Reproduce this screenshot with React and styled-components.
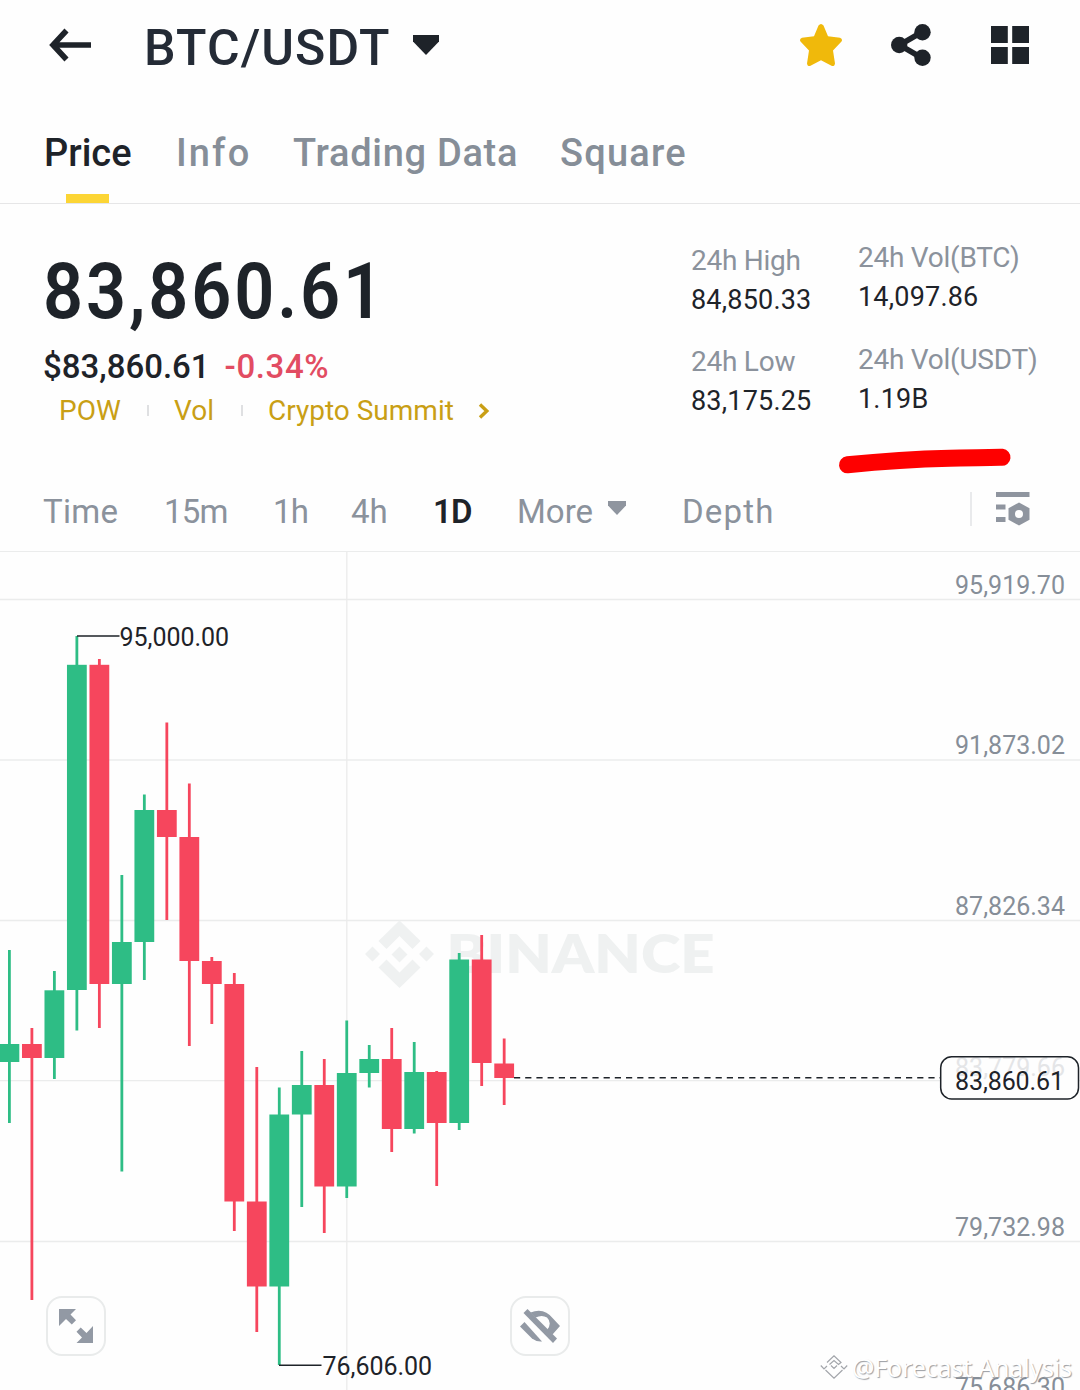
import React from 'react';
import styled, { createGlobalStyle } from 'styled-components';

const GlobalStyle = createGlobalStyle`
    * {
        box-sizing: border-box;
        margin: 0;
        padding: 0;
    }

    body {
        background: #fefefe;
        color: #1e2329;
        font-family: Roboto, "Liberation Sans", sans-serif;
        overflow: hidden;
    }

    svg {
        display: block;
    }
`;

const UP = '#2ebd85';
const DOWN = '#f6465d';

const tabs = [
    { name: 'Price', width: 132, active: true },
    { name: 'Info', width: 117, spacing: 2.1 },
    { name: 'Trading Data', width: 267, spacing: 0.7 },
    { name: 'Square', width: 140, spacing: 1.2 },
];

const intervals = [
    { name: 'Time', width: 121, spacing: 0.3 },
    { name: '15m', width: 109, spacing: -0.8 },
    { name: '1h', width: 78, spacing: -0.8 },
    { name: '4h', width: 82 },
    { name: '1D', width: 84, active: true, spacing: -0.8 },
    { name: 'More', width: 165, menu: true },
    { name: 'Depth', width: 120, spacing: 1.2 },
];

const stats = [
    [
        { label: '24h High', value: '84,850.33' },
        { label: '24h Low', value: '83,175.25' },
    ],
    [
        { label: '24h Vol(BTC)', value: '14,097.86' },
        { label: '24h Vol(USDT)', value: '1.19B' },
    ],
];

// [direction, high, body top, body bottom, low]
const candles = [
    ['up', 950, 1044, 1062, 1123],
    ['down', 1028, 1044, 1058, 1300],
    ['up', 971, 990.3, 1058, 1079],
    ['up', 636, 664.8, 990, 1030.5],
    ['down', 659, 664.8, 984, 1028],
    ['up', 875, 942, 984, 1171.5],
    ['up', 794.5, 810, 942, 980],
    ['down', 722.5, 810, 837, 920],
    ['down', 783.5, 837, 961, 1046],
    ['down', 957, 961, 984, 1024],
    ['down', 973, 984, 1201.5, 1231],
    ['down', 1067, 1201.5, 1286.5, 1332],
    ['up', 1087.5, 1114.5, 1286.5, 1365],
    ['up', 1051, 1085, 1114.5, 1207],
    ['down', 1059, 1085, 1186.5, 1233],
    ['up', 1020.5, 1073, 1186.5, 1198],
    ['up', 1045, 1059, 1073, 1087.5],
    ['down', 1028, 1059, 1129, 1152],
    ['up', 1042, 1072, 1129, 1133.5],
    ['down', 1071, 1072, 1123, 1186],
    ['up', 953, 959.5, 1123, 1130],
    ['down', 935, 959.5, 1063, 1086],
    ['down', 1038.5, 1063.5, 1078, 1105],
];

const axis = [
    { price: '95,919.70', y: 594 },
    { price: '91,873.02', y: 754 },
    { price: '87,826.34', y: 915 },
    { price: '79,732.98', y: 1236 },
    { price: '75,686.30', y: 1396 },
];

const gridLines = [599.5, 760, 920.5, 1080.7, 1241.5];

function Chart() {
    return (
        <ChartSvg viewBox="0 552 1080 838">
            {gridLines.map((y) => (
                <line key={y} x1="0" x2="1080" y1={y} y2={y} stroke="#ebecec" strokeWidth="1.3" />
            ))}
            <line x1="346.8" x2="346.8" y1="552" y2="1390" stroke="#ebecec" strokeWidth="1.3" />

            <g fill="#eff1f1">
                <path d="M399.5 920.5l21 20.5-8 8-13-13-13 13-8-8z" />
                <path d="M399.5 988l21-20.5-8-8-13 13-13-13-8 8z" />
                <path d="M399.5 946.5l8 8-8 8-8-8zM372.5 946.5l7.5 7.5-7.5 7.5-7.5-7.5zM426.5 946.5l7.5 7.5-7.5 7.5-7.5-7.5z" />
                <Brand x="446.5" y="973.3" textLength="268" lengthAdjust="spacingAndGlyphs">BINANCE</Brand>
            </g>

            {candles.map(([dir, high, top, bottom, low], i) => {
                const x = 9.4 + i * 22.49;
                const color = dir === 'up' ? UP : DOWN;
                return (
                    <g key={i} fill={color}>
                        <rect x={x - 1.4} y={high} width="2.8" height={low - high} />
                        <rect x={x - 9.9} y={top} width="19.8" height={bottom - top} />
                    </g>
                );
            })}

            <path d="M77 636H119.5M279 1365.3H321.5" stroke="#1e2329" strokeWidth="1.5" fill="none" />
            <Price x="119.5" y="646" textLength="109.5" $dark>95,000.00</Price>
            <Price x="322.5" y="1375" textLength="109.5" $dark>76,606.00</Price>

            {axis.map((item) => (
                <Price key={item.price} x="955" y={item.y} textLength="110">{item.price}</Price>
            ))}

            <line x1="514" x2="940" y1="1077.7" y2="1077.7" stroke="#1e2329" strokeWidth="1.5" strokeDasharray="6.2 5" />
            <rect x="940.7" y="1056.7" width="137.8" height="42.3" rx="11" fill="#fefefe" />
            <Price x="955" y="1075.5" textLength="110" $ghost>83,779.66</Price>
            <rect x="940.7" y="1056.7" width="137.8" height="42.3" rx="11" fill="none" stroke="#1e2329" strokeWidth="1.5" />
            <Price x="955" y="1090" textLength="109" $dark>83,860.61</Price>
        </ChartSvg>
    );
}

function App() {
    return (
        <>
            <GlobalStyle />
            <Screen>
                <Header>
                    <svg width="42" height="34" viewBox="0 0 42 34" fill="none" stroke="#1e2329" strokeWidth="5.6">
                        <path d="M42 17H5M17.5 2.5L4 17l13.500 14.5" />
                    </svg>
                    <Title>BTC/USDT</Title>
                    <svg width="26" height="20" viewBox="0 0 26 20" fill="#1e2329">
                        <path d="M0 0h26v6.5L13 20 0 6.500z" />
                    </svg>
                    <Actions>
                        <svg width="42" height="42" viewBox="0 0 42 42" fill="#f0b90b">
                            <path d="M18.5 1.5Q21-1.500 23.5 1.500L28 12.300l12 1.500Q43 15 41.500 17.600L33 26.500l2 13Q34.500 43 31.500 41.800L21 36.300 10.500 41.800Q7.500 43 7 39.500l2-13L.5 17.600Q-1 15 2 13.800l12-1.500z" />
                        </svg>
                        <svg width="40" height="42" viewBox="0 0 40 42" fill="#1e2329">
                            <path d="M31 8L8.500 21 31 34" fill="none" stroke="#1e2329" strokeWidth="5.5" />
                            <circle cx="31.5" cy="8.2" r="8.2" />
                            <circle cx="8.2" cy="21" r="8.2" />
                            <circle cx="31.5" cy="33.8" r="8.2" />
                        </svg>
                        <svg width="38" height="38" viewBox="0 0 38 38" fill="#1e2329">
                            <path d="M0 0h16.800v17H0zM21.200 0H38v17H21.200zM0 21h16.800v17H0zM21.200 21H38v17H21.200z" />
                        </svg>
                    </Actions>
                </Header>

                <Tabs>
                    {tabs.map((tab) => (
                        <Tab key={tab.name} $width={tab.width} $active={tab.active} $spacing={tab.spacing}>
                            <span>{tab.name}</span>
                        </Tab>
                    ))}
                </Tabs>

                <Summary>
                    <div>
                        <LastPrice>83,860.61</LastPrice>
                        <FiatRow>
                            <span>$83,860.61</span>
                            <Change>-0.34%</Change>
                        </FiatRow>
                        <Tags>
                            <Tag $width={63}>POW</Tag>
                            <Tag $width={42}>Vol</Tag>
                            <Tag $width={187}>Crypto Summit</Tag>
                            <svg width="12" height="16" viewBox="0 0 12 16" fill="none" stroke="#c99f15" strokeWidth="3.4">
                                <path d="M2 1.500L8.800 8 2 14.500" />
                            </svg>
                        </Tags>
                    </div>
                    {stats.map((column, i) => (
                        <StatColumn key={i} $raised={i === 1}>
                            {column.map((stat) => (
                                <div key={stat.label}>
                                    <StatLabel>{stat.label}</StatLabel>
                                    <StatValue>{stat.value}</StatValue>
                                </div>
                            ))}
                        </StatColumn>
                    ))}
                    <Marker width="180" height="34" viewBox="834 444 180 34">
                        <path d="M847.500 464.800Q900 459.500 950 458.300T1002 457.300" />
                    </Marker>
                </Summary>

                <Intervals>
                    {intervals.map((item) => (
                        <Interval key={item.name} $width={item.width} $active={item.active} $spacing={item.spacing}>
                            {item.name}
                            {item.menu && (
                                <svg width="18" height="14" viewBox="0 0 18 14" fill="#8f959f">
                                    <path d="M0 0h18v4.500L9 14 0 4.500z" />
                                </svg>
                            )}
                        </Interval>
                    ))}
                    <Settings>
                        <svg width="34" height="34" viewBox="0 0 34 34" fill="#8f959f">
                            <path d="M0 0h33.500v5H0zM0 12.500h9.500v5H0zM0 25h9.500v5H0z" />
                            <path fillRule="evenodd" d="M23 10.500l10.500 5.700v11.600L23 33.500l-10.500-5.700V16.200zM23 18a4 4 0 100 8 4 4 0 000-8z" />
                        </svg>
                    </Settings>
                </Intervals>

                <ChartArea>
                    <Chart />
                    <ChartButton $left={46}>
                        <svg width="34" height="34" viewBox="0 0 34 34" fill="#9299a4">
                            <path d="M0 0h17l-5.500 5.500 5.500 5.700-4.200 4.200L7 10 0 17z" />
                            <path d="M34 34H17.500l5.500-5.500-5.500-5.700 4.200-4.200L27.500 24l6.500-7z" />
                        </svg>
                    </ChartButton>
                    <ChartButton $left={510}>
                        <svg width="40" height="34" viewBox="0 0 40 34" fill="#9299a4">
                            <path d="M3.500 4L7.500 0 37 29.500 33 34z" />
                            <path d="M0 17.500L4.500 13 22 32.500Q16.500 33 12 29.500z" />
                            <path fillRule="evenodd" d="M10.500 3.500Q24-2 33 9.500L40 17l-7.500 8.500L27 21Q32.500 14 27 8.500 22 5.500 15.500 8.500z" />
                        </svg>
                    </ChartButton>
                    <Credit>
                        <svg width="28" height="24" viewBox="0 0 28 24" fill="none" stroke="#a3a6ab" strokeWidth="1.2">
                            <path d="M7 7.500L14 .8l7 6.700-2.500 2L14 5.500 9.500 9.500M.8 10.500L4 14l3-3M27.200 10.500L24 14l-3-3M11 10.500l3 3 3-3M5.500 15L14 23.200 22.500 15" />
                        </svg>
                        <span>@Forecast Analysis</span>
                    </Credit>
                </ChartArea>
            </Screen>
        </>
    );
}

const Screen = styled.main`
    width: 1080px;
    height: 1390px;
    overflow: hidden;
    background: #fefefe;
`;

const Header = styled.header`
    display: flex;
    align-items: center;
    height: 100px;
    padding: 0 51px 10px 49px;
`;

const Title = styled.h1`
    width: 269px;
    margin-left: 53px;
    padding-top: 6px;
    font-size: 50px;
    line-height: 60px;
    font-weight: 500;
    letter-spacing: 1.1px;
    white-space: nowrap;
    color: #242b36;
`;

const Actions = styled.div`
    display: flex;
    align-items: center;
    margin-left: auto;

    svg + svg {
        margin-left: 49px;
    }

    svg:last-child {
        margin-left: 60px;
    }
`;

const Tabs = styled.nav`
    display: flex;
    height: 104px;
    padding-left: 44px;
    border-bottom: 1px solid #e6e6e7;
`;

const Tab = styled.div`
    width: ${({ $width }) => $width}px;
    padding-top: 12px;
    font-size: 38px;
    line-height: 82px;
    font-weight: 500;
    letter-spacing: ${({ $spacing }) => $spacing || 0}px;
    white-space: nowrap;
    color: ${({ $active }) => ($active ? '#1e2329' : '#868e98')};

    span {
        display: block;
    }

    &::after {
        content: '';
        display: ${({ $active }) => ($active ? 'block' : 'none')};
        width: 43px;
        height: 9px;
        margin-left: 22px;
        background: #fcd535;
    }
`;

const Summary = styled.section`
    position: relative;
    display: grid;
    grid-template-columns: 648px 166px 1fr;
    height: 267px;
    padding-left: 43px;
`;

const LastPrice = styled.div`
    margin-top: 43px;
    font-size: 78px;
    line-height: 90px;
    font-weight: 600;
    letter-spacing: 3.2px;
    transform: scaleX(0.9);
    transform-origin: left;
    color: #1e2329;
`;

const FiatRow = styled.div`
    display: flex;
    gap: 15px;
    margin-top: 10px;
    font-size: 33px;
    line-height: 40px;
    font-weight: 500;
`;

const Change = styled.span`
    letter-spacing: 0.6px;
    color: #e24c62;
`;

const Tags = styled.div`
    display: flex;
    align-items: center;
    gap: 23px;
    margin-top: 4px;
    padding-left: 16px;
`;

const Tag = styled.span`
    width: ${({ $width }) => $width}px;
    font-size: 28px;
    line-height: 40px;
    white-space: nowrap;
    color: #c99f15;

    & + & {
        box-sizing: content-box;
        padding-left: 29px;
        background: linear-gradient(#dfe0e2, #dfe0e2) 2px 14px / 2px 11px no-repeat;
    }
`;

const StatColumn = styled.div`
    display: flex;
    flex-direction: column;
    gap: ${({ $raised }) => ($raised ? 23 : 22)}px;
    padding-top: ${({ $raised }) => ($raised ? 34 : 37)}px;
    padding-left: ${({ $raised }) => ($raised ? 1 : 0)}px;
    white-space: nowrap;
`;

const StatLabel = styled.div`
    font-size: 28px;
    line-height: 39px;
    letter-spacing: -0.25px;
    color: #8b929c;
`;

const StatValue = styled.div`
    padding-top: 1px;
    font-size: 27px;
    line-height: 39px;
    letter-spacing: 0.2px;
`;

const Marker = styled.svg`
    position: absolute;
    left: 834px;
    top: 240px;

    path {
        fill: none;
        stroke: #fe0000;
        stroke-width: 17;
        stroke-linecap: round;
    }
`;

const Intervals = styled.nav`
    display: flex;
    align-items: center;
    height: 81px;
    padding: 2px 0 0 43px;
    border-bottom: 1px solid #ebecec;
`;

const Interval = styled.div`
    display: flex;
    width: ${({ $width }) => $width}px;
    font-size: 33px;
    line-height: 40px;
    font-weight: ${({ $active }) => ($active ? 600 : 400)};
    letter-spacing: ${({ $spacing }) => $spacing || 0}px;
    color: ${({ $active }) => ($active ? '#1e2329' : '#8b929c')};

    svg {
        margin: 9px 0 0 15px;
    }
`;

const Settings = styled.div`
    display: flex;
    align-items: center;
    height: 34px;
    margin: 0 50px 6px auto;
    padding-left: 24px;
    border-left: 2px solid #e9eaec;
`;

const ChartArea = styled.section`
    position: relative;
    height: 838px;
`;

const ChartSvg = styled.svg`
    width: 1080px;
    height: 838px;
`;

const Brand = styled.text`
    font-family: Lato, sans-serif;
    font-size: 53px;
    font-weight: 800;
`;

const Price = styled.text`
    font-size: 25px;
    fill: ${({ $dark, $ghost }) => ($ghost ? '#e4e5e7' : $dark ? '#1e2329' : '#868e98')};
`;

const ChartButton = styled.button`
    position: absolute;
    left: ${({ $left }) => $left}px;
    top: 744px;
    display: flex;
    align-items: center;
    justify-content: center;
    width: 60px;
    height: 60px;
    border: 2px solid #e9ebeb;
    border-radius: 16px;
    background: #fefefe;
`;

const Credit = styled.div`
    position: absolute;
    left: 820px;
    top: 797px;
    display: flex;
    align-items: center;
    gap: 4px;
    font-family: "Noto Sans", sans-serif;
    font-size: 25px;
    line-height: 36px;
    letter-spacing: -0.18px;
    white-space: nowrap;
    color: #fff;
    text-shadow: 1px 1px 1px #9a9da2;
`;

export default App;
